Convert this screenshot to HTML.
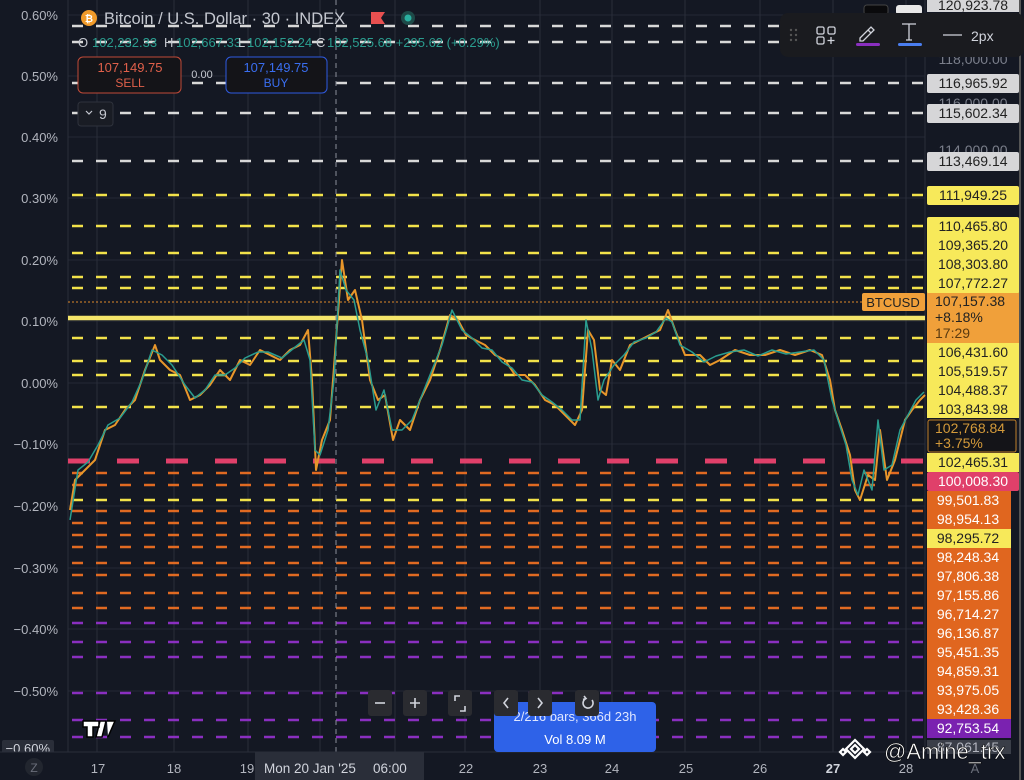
<!DOCTYPE html>
<html><head><meta charset="utf-8"><style>
body{margin:0;width:1024px;height:780px;overflow:hidden;background:#141823;font-family:"Liberation Sans",sans-serif}
svg{position:absolute;left:0;top:0}
.t{font-family:"Liberation Sans",sans-serif}
</style></head><body>
<svg width="1024" height="780" viewBox="0 0 1024 780">
<rect width="1024" height="780" fill="#141823"/>
<g stroke="#232734" stroke-width="1">
<line x1="68" y1="15" x2="925" y2="15"/><line x1="68" y1="76" x2="925" y2="76"/><line x1="68" y1="137" x2="925" y2="137"/><line x1="68" y1="198" x2="925" y2="198"/><line x1="68" y1="260" x2="925" y2="260"/><line x1="68" y1="321" x2="925" y2="321"/><line x1="68" y1="383" x2="925" y2="383"/><line x1="68" y1="444" x2="925" y2="444"/><line x1="68" y1="506" x2="925" y2="506"/><line x1="68" y1="568" x2="925" y2="568"/><line x1="68" y1="629" x2="925" y2="629"/><line x1="68" y1="691" x2="925" y2="691"/>
</g>
<g stroke="#2a2e3a" stroke-width="1">
<line x1="97" y1="0" x2="97" y2="752"/><line x1="174" y1="0" x2="174" y2="752"/><line x1="248" y1="0" x2="248" y2="752"/><line x1="320" y1="0" x2="320" y2="752"/><line x1="395" y1="0" x2="395" y2="752"/><line x1="465" y1="0" x2="465" y2="752"/><line x1="540" y1="0" x2="540" y2="752"/><line x1="612" y1="0" x2="612" y2="752"/><line x1="685" y1="0" x2="685" y2="752"/><line x1="760" y1="0" x2="760" y2="752"/><line x1="833" y1="0" x2="833" y2="752"/><line x1="906" y1="0" x2="906" y2="752"/>
</g>
<line x1="68" y1="0" x2="68" y2="752" stroke="#2a2e3a"/>
<line x1="925" y1="0" x2="925" y2="780" stroke="#2a2e3a"/>
<g stroke-width="2.5" stroke-dasharray="11 13" fill="none">
<g stroke="#d8d8d8"><line x1="72" y1="26" x2="925" y2="26"/><line x1="72" y1="42" x2="925" y2="42"/><line x1="72" y1="83" x2="925" y2="83"/><line x1="72" y1="113" x2="925" y2="113"/><line x1="72" y1="161" x2="925" y2="161"/></g>
<g stroke="#f2e24a"><line x1="72" y1="195" x2="925" y2="195"/><line x1="72" y1="226" x2="925" y2="226"/><line x1="72" y1="253" x2="925" y2="253"/><line x1="72" y1="277" x2="925" y2="277"/><line x1="72" y1="288" x2="925" y2="288"/><line x1="72" y1="338" x2="925" y2="338"/><line x1="72" y1="361" x2="925" y2="361"/><line x1="72" y1="375" x2="925" y2="375"/><line x1="72" y1="407" x2="925" y2="407"/><line x1="72" y1="500" x2="925" y2="500"/></g>
<g stroke="#e06a22"><line x1="72" y1="473" x2="925" y2="473"/><line x1="72" y1="485" x2="925" y2="485"/><line x1="72" y1="511" x2="925" y2="511"/><line x1="72" y1="523" x2="925" y2="523"/><line x1="72" y1="535" x2="925" y2="535"/><line x1="72" y1="547" x2="925" y2="547"/><line x1="72" y1="563" x2="925" y2="563"/><line x1="72" y1="575" x2="925" y2="575"/><line x1="72" y1="593" x2="925" y2="593"/><line x1="72" y1="608" x2="925" y2="608"/></g>
<g stroke="#8a2fc0"><line x1="72" y1="623" x2="925" y2="623"/><line x1="72" y1="642" x2="925" y2="642"/><line x1="72" y1="657" x2="925" y2="657"/><line x1="72" y1="693" x2="925" y2="693"/><line x1="72" y1="720" x2="925" y2="720"/><line x1="72" y1="737" x2="925" y2="737"/></g>
</g>
<line x1="68" y1="461" x2="925" y2="461" stroke="#e0406a" stroke-width="5" stroke-dasharray="22 27"/>
<line x1="68" y1="302" x2="862" y2="302" stroke="#e08a2a" stroke-width="1" stroke-dasharray="2 2"/>
<line x1="68" y1="318" x2="925" y2="318" stroke="#f5e66a" stroke-width="4.5"/>
<line x1="336" y1="0" x2="336" y2="752" stroke="#8a8e9a" stroke-width="1" stroke-dasharray="5 4"/>
<polyline fill="none" stroke="#e8962a" stroke-width="2" stroke-linejoin="round" points="70,510 75,480 85,470 95,460 105,430 115,425 125,410 135,400 145,370 155,345 160,360 170,370 180,375 190,400 200,395 210,385 220,370 230,380 240,360 250,365 260,350 270,355 280,360 290,350 300,345 308,330 312,380 316,470 322,440 330,420 336,340 342,260 348,300 355,290 362,320 370,380 378,400 385,395 393,440 400,420 410,430 420,400 430,380 440,350 450,315 458,320 466,335 475,340 485,345 495,355 505,360 515,375 525,375 535,385 545,400 555,405 565,415 575,425 582,410 588,330 594,340 600,390 606,395 612,360 620,370 630,345 640,340 650,335 660,330 668,310 675,330 685,355 700,355 710,365 720,360 735,350 750,355 765,355 780,350 795,355 810,350 822,355 830,380 835,410 842,430 850,455 855,490 860,500 868,475 875,480 880,430 887,480 895,460 905,420 912,410 920,400 925,395"/>
<polyline fill="none" stroke="#2a9d8f" stroke-width="1.5" stroke-linejoin="round" points="70,520 78,470 88,462 98,445 108,425 120,418 132,402 142,380 152,350 162,355 172,365 185,385 195,398 205,390 215,375 225,375 235,368 245,358 258,352 268,352 282,358 294,348 304,340 310,360 315,450 320,455 328,430 334,380 340,270 346,290 354,300 360,330 368,360 376,410 384,390 392,430 402,430 412,420 422,395 432,370 442,345 452,310 462,330 472,338 482,348 492,350 502,362 512,368 522,380 532,382 542,395 552,402 562,410 572,420 580,420 586,320 592,350 598,400 604,380 614,365 624,355 634,342 646,338 656,332 666,318 672,322 680,345 692,352 704,362 716,356 730,352 744,350 758,356 772,350 786,354 800,352 814,350 824,360 832,400 838,420 846,445 852,480 858,495 864,470 872,490 878,420 884,470 892,465 900,430 908,415 916,400 924,392"/>
<g class="t" font-size="13" fill="#b2b5be" text-anchor="end">
<text x="58" y="20">0.60%</text><text x="58" y="81">0.50%</text><text x="58" y="142">0.40%</text><text x="58" y="203">0.30%</text><text x="58" y="265">0.20%</text><text x="58" y="326">0.10%</text><text x="58" y="388">0.00%</text><text x="58" y="449">−0.10%</text><text x="58" y="511">−0.20%</text><text x="58" y="573">−0.30%</text><text x="58" y="634">−0.40%</text><text x="58" y="696">−0.50%</text>
</g>
<rect x="2" y="740" width="52" height="14" rx="2" fill="#2a2e39"/>
<text x="50" y="753" class="t" font-size="13" fill="#d1d4dc" text-anchor="end">−0.60%</text>
<rect x="0" y="752" width="1024" height="28" fill="#141823"/>
<line x1="0" y1="752" x2="925" y2="752" stroke="#2a2e3a"/>
<circle cx="34" cy="767" r="9" fill="#22262f"/>
<text x="34" y="772" class="t" font-size="12" fill="#6a6e7a" text-anchor="middle">Z</text>
<g class="t" font-size="13" fill="#b2b5be" text-anchor="middle">
<text x="98" y="773">17</text><text x="174" y="773">18</text><text x="247" y="773">19</text><text x="466" y="773">22</text><text x="540" y="773">23</text><text x="612" y="773">24</text><text x="686" y="773">25</text><text x="760" y="773">26</text><text x="833" y="773" fill="#d1d4dc" font-weight="bold">27</text><text x="906" y="773">28</text><text x="975" y="773" fill="#6a6e7a">A</text>
</g>
<rect x="255" y="752" width="169" height="28" fill="#2a2e39"/>
<text x="264" y="773" class="t" font-size="13.5" fill="#d1d4dc">Mon 20 Jan '25</text>
<text x="373" y="773" class="t" font-size="13.5" fill="#d1d4dc">06:00</text>
<g class="t" font-size="14">
<rect x="927" y="0" width="92" height="12" fill="#d6d6d8"/><text x="973" y="10" text-anchor="middle" fill="#222">120,923.78</text>
<text x="973" y="64" text-anchor="middle" fill="#7a7e8a">118,000.00</text>
<text x="973" y="108" text-anchor="middle" fill="#7a7e8a">116,000.00</text>
<text x="973" y="155" text-anchor="middle" fill="#7a7e8a">114,000.00</text>
<rect x="927" y="74" width="92" height="19" rx="2" fill="#d6d6d8"/><text x="973" y="88" text-anchor="middle" fill="#222">116,965.92</text>
<rect x="927" y="104" width="92" height="19" rx="2" fill="#d6d6d8"/><text x="973" y="118" text-anchor="middle" fill="#222">115,602.34</text>
<rect x="927" y="152" width="92" height="19" rx="2" fill="#d6d6d8"/><text x="973" y="166" text-anchor="middle" fill="#222">113,469.14</text>
<rect x="927" y="186" width="92" height="19" rx="2" fill="#f7e95a"/><text x="973" y="200" text-anchor="middle" fill="#222">111,949.25</text>
<rect x="927" y="217" width="92" height="77" rx="2" fill="#f7e95a"/>
<text x="973" y="231" text-anchor="middle" fill="#222">110,465.80</text><text x="973" y="250" text-anchor="middle" fill="#222">109,365.20</text><text x="973" y="269" text-anchor="middle" fill="#222">108,303.80</text><text x="973" y="288" text-anchor="middle" fill="#222">107,772.27</text>
<rect x="862" y="293" width="63" height="18" rx="2" fill="#f0a03a"/><text x="893" y="307" text-anchor="middle" fill="#222" font-size="13">BTCUSD</text>
<rect x="927" y="293" width="92" height="50" fill="#f0a03a"/>
<text x="935" y="306" fill="#222">107,157.38</text><text x="935" y="322" fill="#222">+8.18%</text><text x="935" y="338" fill="#5a3a10">17:29</text>
<rect x="927" y="343" width="92" height="75" fill="#f7e95a"/>
<text x="973" y="357" text-anchor="middle" fill="#222">106,431.60</text><text x="973" y="376" text-anchor="middle" fill="#222">105,519.57</text><text x="973" y="395" text-anchor="middle" fill="#222">104,488.37</text><text x="973" y="414" text-anchor="middle" fill="#222">103,843.98</text>
<rect x="928" y="420" width="88" height="32" rx="2" fill="#141418" stroke="#c0802a"/>
<text x="935" y="433" fill="#d49a3a">102,768.84</text><text x="935" y="448" fill="#d49a3a">+3.75%</text>
<rect x="927" y="453" width="92" height="19" fill="#f7e95a"/><text x="973" y="467" text-anchor="middle" fill="#222">102,465.31</text>
<rect x="927" y="472" width="92" height="19" rx="2" fill="#e0406a"/><text x="973" y="486" text-anchor="middle" fill="#fff">100,008.30</text>
<rect x="927" y="491" width="84" height="228" fill="#e0661f"/>
<rect x="927" y="529" width="84" height="19" fill="#f7e95a"/>
<rect x="927" y="719" width="84" height="19" fill="#7a22b0"/>
<g fill="#fff" text-anchor="middle">
<text x="968" y="505">99,501.83</text><text x="968" y="524">98,954.13</text><text x="968" y="543" fill="#222">98,295.72</text><text x="968" y="562">98,248.34</text><text x="968" y="581">97,806.38</text><text x="968" y="600">97,155.86</text><text x="968" y="619">96,714.27</text><text x="968" y="638">96,136.87</text><text x="968" y="657">95,451.35</text><text x="968" y="676">94,859.31</text><text x="968" y="695">93,975.05</text><text x="968" y="714">93,428.36</text><text x="968" y="733">92,753.54</text>
</g>
<rect x="927" y="740" width="84" height="14" fill="#3a3e48"/><text x="968" y="752" text-anchor="middle" fill="#b2b5be">87,061.45</text>
</g>
<line x1="1020" y1="0" x2="1020" y2="780" stroke="#555" stroke-width="2"/>
<circle cx="89" cy="18" r="8" fill="#f09a2a"/><text x="89" y="22" class="t" font-size="10" font-weight="bold" fill="#fff" text-anchor="middle">₿</text>
<text x="104" y="24" class="t" font-size="16.5" fill="#c5c8d0">Bitcoin / U.S. Dollar · 30 · INDEX</text>
<path d="M371 12 h14 l-4 6 l4 6 h-14z" fill="#e85050"/>
<circle cx="408" cy="18" r="7" fill="#1e4a48"/><circle cx="408" cy="18" r="3.5" fill="#2ab0a0"/>
<g class="t" font-size="13"><text x="78" y="47" fill="#c5c8d0">O</text><text x="92" y="47" fill="#2a9d8f">102,232.33</text><text x="164" y="47" fill="#c5c8d0">H</text><text x="176" y="47" fill="#2a9d8f">102,667.33</text><text x="238" y="47" fill="#c5c8d0">L</text><text x="247" y="47" fill="#2a9d8f">102,152.24</text><text x="316" y="47" fill="#c5c8d0">C</text><text x="327" y="47" fill="#2a9d8f">102,525.68 +295.62 (+0.29%)</text></g>
<rect x="78" y="57" width="103" height="36" rx="5" fill="#141418" stroke="#c04a38"/>
<text x="130" y="72" class="t" font-size="13" fill="#e0604a" text-anchor="middle">107,149.75</text><text x="130" y="87" class="t" font-size="12" fill="#e0604a" text-anchor="middle">SELL</text>
<text x="202" y="78" class="t" font-size="11" fill="#c5c8d0" text-anchor="middle">0.00</text>
<rect x="226" y="57" width="101" height="36" rx="5" fill="#141418" stroke="#2e5ae0"/>
<text x="276" y="72" class="t" font-size="13" fill="#3a6ef0" text-anchor="middle">107,149.75</text><text x="276" y="87" class="t" font-size="12" fill="#3a6ef0" text-anchor="middle">BUY</text>
<rect x="78" y="102" width="35" height="24" rx="3" fill="#191c24" stroke="#2e323c"/>
<path d="M86 111 l3 3 l3 -3" stroke="#c5c8d0" fill="none" stroke-width="1.2"/><text x="99" y="119" class="t" font-size="14" fill="#c5c8d0">9</text>
<rect x="864" y="5" width="24" height="10" rx="3" fill="#0a0a0c" stroke="#444"/><rect x="896" y="5" width="26" height="10" rx="3" fill="#e8e8e8"/>
<rect x="780" y="13" width="244" height="44" rx="8" fill="#1a1b1f"/>
<g fill="#555"><circle cx="791" cy="30" r="1.2"/><circle cx="796" cy="30" r="1.2"/><circle cx="791" cy="35" r="1.2"/><circle cx="796" cy="35" r="1.2"/><circle cx="791" cy="40" r="1.2"/><circle cx="796" cy="40" r="1.2"/></g>
<g stroke="#d1d4dc" fill="none" stroke-width="1.3"><rect x="817" y="27" width="7" height="7" rx="1.5"/><rect x="828" y="27" width="7" height="7" rx="1.5"/><rect x="817" y="37" width="7" height="7" rx="1.5"/><path d="M831 37v7M827.5 40.5h7"/>
<path d="M860 38 l11 -11 l3 3 l-11 11 h-3z M868 30 l3 3"/>
<path d="M902 24 h14 M909 24 v16 M906 40 h6"/><path d="M943 35 h19"/></g>
<rect x="856" y="43" width="24" height="3" rx="1.5" fill="#8a2fc0"/><rect x="898" y="43" width="24" height="3" rx="1.5" fill="#4a7ef0"/>
<text x="971" y="41" class="t" font-size="14" fill="#d1d4dc">2px</text>
<g fill="#2a2b30"><rect x="368" y="690" width="24" height="26" rx="3"/><rect x="403" y="690" width="24" height="26" rx="3"/><rect x="448" y="690" width="24" height="26" rx="3"/></g>
<rect x="494" y="702" width="162" height="50" rx="4" fill="#2e62e8"/>
<text x="575" y="721" class="t" font-size="13" fill="#dfe6ff" text-anchor="middle">2/216 bars, 366d 23h</text>
<text x="575" y="744" class="t" font-size="13" fill="#fff" text-anchor="middle">Vol 8.09 M</text>
<g fill="#2a2b30"><rect x="494" y="690" width="24" height="26" rx="3"/><rect x="528" y="690" width="24" height="26" rx="3"/><rect x="575" y="690" width="24" height="26" rx="3"/></g>
<g stroke="#d1d4dc" fill="none" stroke-width="1.6"><path d="M375 703h10"/><path d="M410 703h10M415 698v10"/><path d="M455 701v-5h5M465 706v5h-5"/><path d="M508 698l-4 5l4 5"/><path d="M538 698l4 5l-4 5"/><path d="M592 700a5 5 0 1 1 -6 -1.5M584 696l2 2.5l-3 1"/></g>
<path d="M83 721 h16 v6 h-6 v10 h-6 v-10 h-4z M100 721 h6 l-4 16 h-6z M107 721 h8 l-7 16" fill="#fff" stroke="#000" stroke-width="1.5"/>
<g fill="none" stroke="#fff" stroke-width="2.2"><path d="M855 740 l9 9 l-9 9 l-9 -9z"/><path d="M855 745 l4 4 l-4 4 l-4 -4z"/><path d="M843 749 l3 3 l-3 3 l-3 -3z M867 749 l3 3 l-3 3 l-3 -3z"/></g>
<text x="884" y="759" class="t" font-size="22" fill="#fff" stroke="#000" stroke-width="0.5">@Amine_trx</text>
</svg>
</body></html>
